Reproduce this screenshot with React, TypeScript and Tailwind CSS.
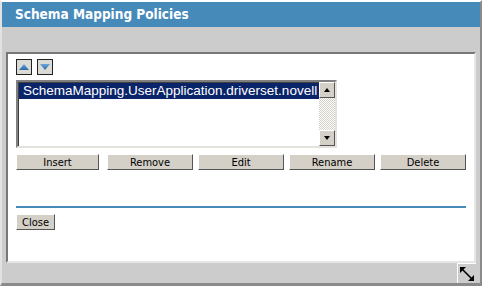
import React from 'react'

const ui = { fontFamily: '"DejaVu Sans Condensed", "DejaVu Sans", sans-serif' }

function Btn({ label, className }: { label: string; className: string }) {
  return (
    <button
      style={ui}
      className={`h-[16px] bg-[#d4d0c8] border border-t-white border-l-white border-r-[#555] border-b-[#555] text-[11px] leading-none text-black ${className}`}
    >
      {label}
    </button>
  )
}

function ArrowBtn({ up }: { up: boolean }) {
  return (
    <div className="w-[16px] h-[16px] bg-[#dcdad4] border border-[#222] flex items-center justify-center">
      <svg width="12" height="8" viewBox="0 0 12 8">
        <defs>
          <linearGradient id={up ? 'gu' : 'gd'} x1="0" y1="0" x2="0" y2="1">
            <stop offset="0" stopColor="#6aa6dc" />
            <stop offset="1" stopColor="#2a68a8" />
          </linearGradient>
        </defs>
        {up ? (
          <polygon points="6,1 11,7 1,7" fill="url(#gu)" />
        ) : (
          <polygon points="1,1 11,1 6,7" fill="url(#gd)" />
        )}
      </svg>
    </div>
  )
}

function ScrollBtn({ up }: { up: boolean }) {
  return (
    <div className="w-[16px] h-[16px] bg-[#d4d0c8] border border-t-white border-l-white border-r-[#555] border-b-[#555] flex items-center justify-center">
      <svg width="8" height="6" viewBox="0 0 8 6">
        {up ? <polygon points="4,1 7,5 1,5" fill="#000" /> : <polygon points="1,1 7,1 4,5" fill="#000" />}
      </svg>
    </div>
  )
}

export default function App() {
  return (
    <div className="w-[482px] h-[286px] flex flex-col bg-[#cccccc] border-t-2 border-l-2 border-r-2 border-b-[3px] border-t-white border-l-[#e2e2e2] border-r-[#8a8a8a] border-b-[#8a8a8a]">
      {/* title bar */}
      <div className="h-[25px] bg-[#468aba] flex items-center pl-[13px] shrink-0">
        <span
          style={{ fontFamily: '"DejaVu Sans Condensed", "DejaVu Sans", sans-serif' }}
          className="text-white text-[13.5px] font-bold"
        >
          Schema Mapping Policies
        </span>
      </div>

      <div className="pt-[25px] pl-[4px] pr-[4px] flex-1 flex flex-col">
        {/* panel */}
        <div className="h-[211px] bg-white border-2 border-t-[#777] border-l-[#777] border-r-[#e6e6e6] border-b-[#e6e6e6] px-[8px] pt-[5px]">
          <div className="flex gap-[5px]">
            <ArrowBtn up />
            <ArrowBtn up={false} />
          </div>

          {/* list box */}
          <div className="mt-[5px] w-[321px] h-[68px] flex border-2 border-t-[#808080] border-l-[#808080] border-r-[#e4e2dc] border-b-[#e4e2dc] shadow-[inset_1px_1px_0_#404040]">
            <div className="flex-1 pt-[1px] pl-[1px]">
              <div
                style={{ fontFamily: '"Liberation Sans", Arial, sans-serif' }}
                className="h-[16px] bg-[#0a246a] text-white text-[13.5px] leading-[16px] pl-[4px] whitespace-nowrap overflow-hidden"
              >
                SchemaMapping.UserApplication.driverset.novell
              </div>
            </div>
            <div className="w-[16px] flex flex-col bg-[#ebe9e4]">
              <ScrollBtn up />
              <div className="flex-1 bg-[repeating-conic-gradient(#d4d0c8_0_25%,#ffffff_0_50%)] bg-[length:2px_2px]" />
              <ScrollBtn up={false} />
            </div>
          </div>

          {/* action buttons */}
          <div className="mt-[6px] flex">
            <Btn label="Insert" className="w-[83px] mr-[8px]" />
            <Btn label="Remove" className="w-[86px] mr-[5px]" />
            <Btn label="Edit" className="w-[86px] mr-[5px]" />
            <Btn label="Rename" className="w-[86px] mr-[5px]" />
            <Btn label="Delete" className="w-[86px]" />
          </div>

          <div className="mt-[36px] h-[2px] bg-[#468aba]" />

          <Btn label="Close" className="mt-[6px] w-[39px] h-[15px] block" />
        </div>

        {/* bottom bar */}
        <div className="flex-1 flex justify-end">
          <div className="w-[19px] h-[20px] border-t border-l border-t-white border-l-white flex items-center justify-center">
            <svg width="16" height="16" viewBox="0 0 16 16">
              <line x1="3" y1="3" x2="13" y2="13" stroke="#000" strokeWidth="1.6" />
              <polygon points="1,1 7,1 1,7" fill="#000" />
              <polygon points="15,15 9,15 15,9" fill="#000" />
            </svg>
          </div>
        </div>
      </div>
    </div>
  )
}
